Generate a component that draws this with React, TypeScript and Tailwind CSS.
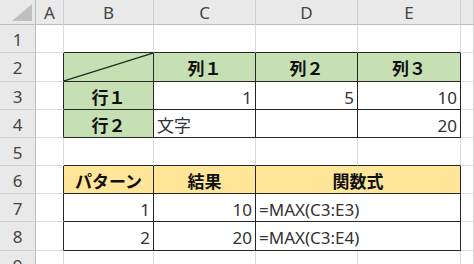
import React from 'react';

type Cell = { text?: string; align?: 'left' | 'right' | 'center'; bold?: boolean; fill?: 'green' | 'yellow'; diagonal?: boolean };

const cols = ['A', 'B', 'C', 'D', 'E', ''];
const rowHeights = ['h-[28px]', 'h-[29px]', 'h-[28px]', 'h-[28px]', 'h-[28px]', 'h-[28px]', 'h-[28px]', 'h-[29px]', 'h-[28px]'];

// sheet contents keyed by "row,col" (col 0 = A)
const cells: Record<string, Cell> = {
  '2,1': { fill: 'green', diagonal: true },
  '2,2': { text: '列１', align: 'center', bold: true, fill: 'green' },
  '2,3': { text: '列２', align: 'center', bold: true, fill: 'green' },
  '2,4': { text: '列３', align: 'center', bold: true, fill: 'green' },
  '3,1': { text: '行１', align: 'center', bold: true, fill: 'green' },
  '3,2': { text: '1', align: 'right' },
  '3,3': { text: '5', align: 'right' },
  '3,4': { text: '10', align: 'right' },
  '4,1': { text: '行２', align: 'center', bold: true, fill: 'green' },
  '4,2': { text: '文字', align: 'left' },
  '4,4': { text: '20', align: 'right' },
  '6,1': { text: 'パターン', align: 'center', bold: true, fill: 'yellow' },
  '6,2': { text: '結果', align: 'center', bold: true, fill: 'yellow' },
  '6,3': { text: '関数式', align: 'center', bold: true, fill: 'yellow' },
  '6,4': { fill: 'yellow' },
  '7,1': { text: '1', align: 'right' },
  '7,2': { text: '10', align: 'right' },
  '7,3': { text: '=MAX(C3:E3)', align: 'left' },
  '8,1': { text: '2', align: 'right' },
  '8,2': { text: '20', align: 'right' },
  '8,3': { text: '=MAX(C3:E4)', align: 'left' },
};

// merged header D6:E6 and formula cells D7:E7, D8:E8
const merged = new Set(['6,3', '7,3', '8,3']);
const covered = new Set(['6,4', '7,4', '8,4']);

const inTable = (r: number, c: number) =>
  c >= 1 && c <= 4 && ((r >= 2 && r <= 4) || (r >= 6 && r <= 8));

const colWidths = ['w-[28px]', 'w-[90px]', 'w-[102px]', 'w-[102px]', 'w-[103px]', 'flex-1'];

function SheetCell({ r, c }: { r: number; c: number }) {
  const key = `${r},${c}`;
  if (covered.has(key)) return null;
  const cell = cells[key] ?? {};
  const wide = merged.has(key);
  const darkRight = inTable(r, c) || inTable(r, c + 1) || (wide && inTable(r, c + 2));
  const darkBottom = inTable(r, c) || inTable(r + 1, c);
  const width = wide ? 'w-[205px]' : colWidths[c];
  const bg = cell.fill === 'green' ? 'bg-[#c6e0b4]' : cell.fill === 'yellow' ? 'bg-[#ffe699]' : 'bg-white';
  const justify = cell.align === 'right' ? 'justify-end pr-[3px]' : cell.align === 'center' ? 'justify-center' : 'justify-start pl-[3px]';
  return (
    <div
      className={`relative flex items-center shrink-0 border-r border-b ${width} ${bg} ${justify} ${
        darkRight ? 'border-r-[#262626]' : 'border-r-[#dadada]'
      } ${darkBottom ? 'border-b-[#262626]' : 'border-b-[#dadada]'}`}
    >
      {cell.diagonal && (
        <svg className="absolute inset-0 h-full w-full" preserveAspectRatio="none" viewBox="0 0 100 100">
          <line x1="0" y1="100" x2="100" y2="0" stroke="#262626" strokeWidth="1.2" vectorEffect="non-scaling-stroke" />
        </svg>
      )}
      {cell.text && (
        <span className={`pt-[3px] text-[17px] leading-none whitespace-nowrap ${cell.bold ? 'font-bold text-[#111]' : 'text-[#333]'}`}>
          {cell.text}
        </span>
      )}
    </div>
  );
}

export default function App() {
  return (
    <div className="h-[264px] w-[474px] overflow-hidden bg-white font-['Noto_Sans','Noto_Sans_CJK_JP',sans-serif]">
      {/* column letters */}
      <div className="flex h-[25px]">
        <div className="relative w-[36px] shrink-0 border-r border-b border-[#bdbdbd] bg-[#e9e9e9]">
          <svg className="absolute right-[3px] bottom-[3px]" width="20" height="17" viewBox="0 0 20 17">
            <polygon points="20,0 20,17 0,17" fill="#bfbfbf" />
          </svg>
        </div>
        {cols.map((name, c) => (
          <div
            key={c}
            className={`flex shrink-0 items-center justify-center border-r border-b border-r-[#cfcfcf] border-b-[#bdbdbd] bg-[#e9e9e9] pt-[1px] text-[17px] text-[#444] ${colWidths[c]}`}
          >
            {name}
          </div>
        ))}
      </div>
      {rowHeights.map((h, i) => {
        const r = i + 1;
        return (
          <div key={r} className={`flex ${h}`}>
            <div className="flex w-[36px] shrink-0 items-center justify-center border-r border-b border-r-[#bdbdbd] border-b-[#cfcfcf] bg-[#e9e9e9] pt-[2px] text-[17px] text-[#444]">
              {r}
            </div>
            {cols.map((_, c) => (
              <SheetCell key={c} r={r} c={c} />
            ))}
          </div>
        );
      })}
    </div>
  );
}
